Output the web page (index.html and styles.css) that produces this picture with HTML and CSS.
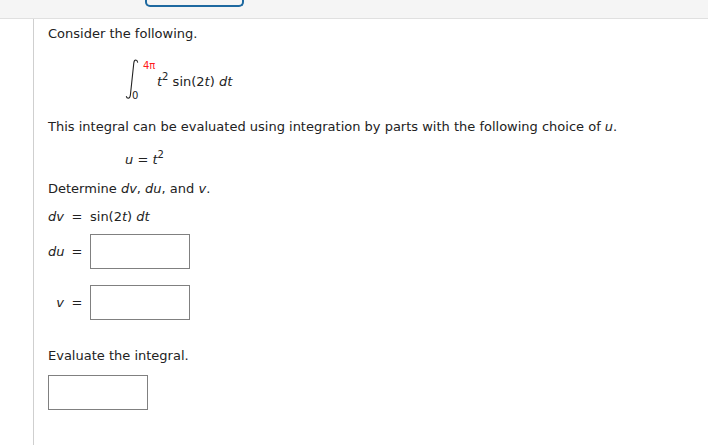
FILE: index.html
```html
<!DOCTYPE html>
<html>
<head>
<meta charset="utf-8">
<link rel="stylesheet" href="styles.css">
</head>
<body>
<div class="topbar"><div class="tab"></div></div>
<div class="main">
  <div class="content">
    <p class="p1">Consider the following.</p>
    <div class="integral">
      <svg class="isign" width="14" height="42" viewBox="0 0 14 42"><path d="M12.6 4.2 C12.4 2.6 11.6 2 10.8 2 C9.6 2 9 3 8.8 5 L5.4 37 C5.2 39.2 4.4 40.2 3.2 40.2 C2.3 40.2 1.6 39.6 1.4 38.6" fill="none" stroke="#222" stroke-width="1.1" stroke-linecap="round"/></svg>
      <span class="limits"><span class="upper">4π</span><span class="lower">0</span></span>
      <span class="expr"><i>t</i><sup>2</sup> sin(2<i>t</i>) <i>dt</i></span>
    </div>
    <p class="p2">This integral can be evaluated using integration by parts with the following choice of <i>u</i>.</p>
    <p class="ueq"><i>u</i> = <i>t</i><sup>2</sup></p>
    <p class="p3">Determine <i>dv</i>, <i>du</i>, and <i>v</i>.</p>
    <div class="rows">
      <div class="row r-dv"><span class="lbl"><i>dv</i></span><span class="eq">=</span><span class="val">sin(2<i>t</i>) <i>dt</i></span></div>
      <div class="row r-du"><span class="lbl"><i>du</i></span><span class="eq">=</span><span class="box"></span></div>
      <div class="row r-v"><span class="lbl"><i>v</i></span><span class="eq">=</span><span class="box"></span></div>
    </div>
    <p class="p4">Evaluate the integral.</p>
    <span class="box"></span>
  </div>
</div>
</body>
</html>
```
FILE: styles.css
```css
html, body { margin: 0; padding: 0; background: #fff; }
body {
  font-family: "DejaVu Sans", Verdana, sans-serif;
  font-size: 13px;
  color: #222;
  width: 708px;
  height: 445px;
  overflow: hidden;
}
i { font-style: italic; }
sup { font-size: 10px; vertical-align: 0; position: relative; top: -6px; line-height: 0; }
.topbar {
  height: 18px;
  background: #f5f5f5;
  border-bottom: 1px solid #e0e0e0;
  padding-left: 145px;
}
.tab {
  width: 95px;
  height: 5px;
  border: 2px solid #1e69a0;
  border-top: none;
  border-radius: 0 0 5px 5px;
}
.main {
  margin-left: 33px;
  border-left: 1px solid #cfcfcf;
  height: 426px;
}
.content { padding-left: 14px; padding-top: 7px; }
p { margin: 0; line-height: 16px; }
.integral {
  display: flex;
  align-items: flex-start;
  margin-left: 77px;
  margin-top: 16px;
  height: 42px;
}
.isign { display: block; flex: none; }
.limits {
  display: flex;
  flex-direction: column;
  justify-content: space-between;
  height: 42px;
  font-size: 10px;
  line-height: 10px;
  width: 18px;
}
.upper { color: #ff1a1a; margin-left: 4px; margin-top: 3px; }
.lower { margin-left: -7px; margin-bottom: -1px; }
.expr { margin-top: 16px; line-height: 16px; }
.p2 { margin-top: 19px; }
.ueq { margin-top: 17px; margin-left: 77px; }
.p3 { margin-top: 13px; }
.rows { margin-top: 12px; display: flex; flex-direction: column; }
.row { display: flex; align-items: center; line-height: 16px; }
.lbl { width: 16px; text-align: right; }
.eq { width: 26px; text-align: center; }
.r-du { margin-top: 9px; }
.r-v { margin-top: 16px; }
.box {
  display: block;
  width: 98px;
  height: 33px;
  border: 1px solid #808080;
  background: #fff;
}
.p4 { margin-top: 28px; }
.content > .box { margin-top: 11px; }
```
